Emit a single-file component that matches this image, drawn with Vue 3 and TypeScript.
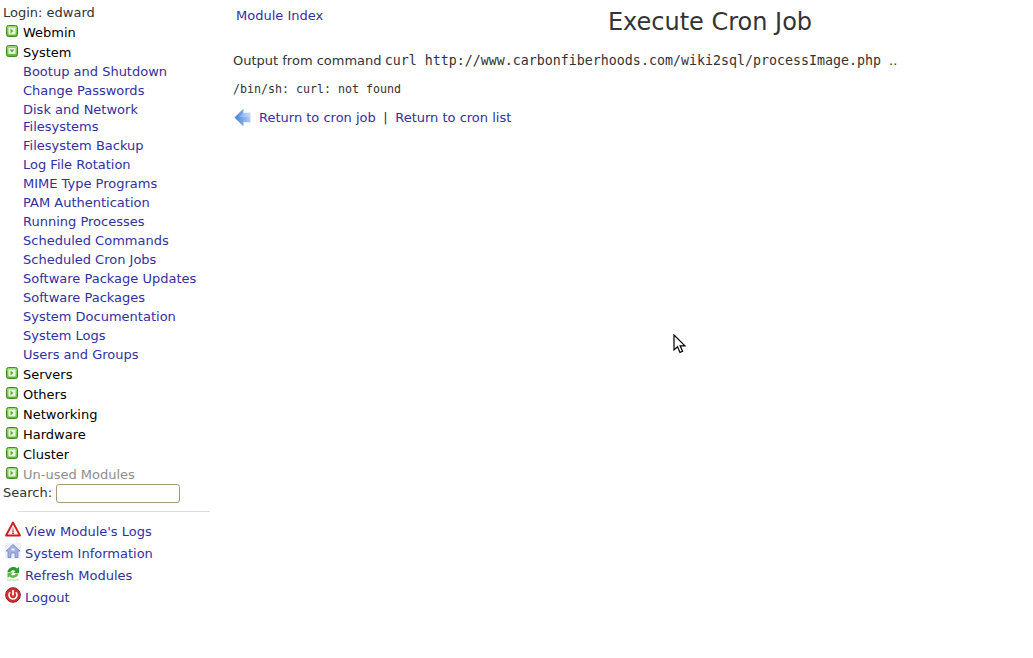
<script setup lang="ts">
const links: string[][] = [
  ['Bootup and Shutdown'],
  ['Change Passwords'],
  ['Disk and Network', 'Filesystems'],
  ['Filesystem Backup'],
  ['Log File Rotation'],
  ['MIME Type Programs'],
  ['PAM Authentication'],
  ['Running Processes'],
  ['Scheduled Commands'],
  ['Scheduled Cron Jobs'],
  ['Software Package Updates'],
  ['Software Packages'],
  ['System Documentation'],
  ['System Logs'],
  ['Users and Groups'],
]
const closed = ['Servers', 'Others', 'Networking', 'Hardware', 'Cluster']
</script>

<template>
  <div class="page">
    <svg width="0" height="0" class="defs">
      <defs>
        <linearGradient id="tg" x1="0" y1="0" x2="0" y2="1"><stop offset="0" stop-color="#9ade74"/><stop offset="1" stop-color="#5cb338"/></linearGradient>
        <linearGradient id="ar" x1="0" y1="0" x2="1" y2="0"><stop offset="0" stop-color="#3f7fdc"/><stop offset="1" stop-color="#b5cff2"/></linearGradient>
      </defs>
    </svg>
    <aside class="side">
      <div class="login">Login: edward</div>
      <div class="cat">
        <svg class="tog" viewBox="0 0 12 12"><rect x=".5" y=".5" width="11" height="11" rx="2" fill="url(#tg)" stroke="#3d8a22"/><rect x="2.500" y="2.500" width="7" height="7" fill="#e9f8dd"/><path d="M4.500 3.500l3 2.500-3 2.500z" fill="#5cb338"/></svg>
        <span>Webmin</span>
      </div>
      <div class="cat">
        <svg class="tog" viewBox="0 0 12 12"><rect x=".5" y=".5" width="11" height="11" rx="2" fill="url(#tg)" stroke="#3d8a22"/><rect x="2.500" y="3" width="7" height="6" fill="#e9f8dd"/><path d="M3.500 4.500h5L6 7.500z" fill="#5cb338"/></svg>
        <span>System</span>
      </div>
      <ul class="items">
        <li v-for="l in links" :key="l[0]"><a v-for="p in l" :key="p">{{ p }}</a></li>
      </ul>
      <div v-for="c in closed" :key="c" class="cat">
        <svg class="tog" viewBox="0 0 12 12"><rect x=".5" y=".5" width="11" height="11" rx="2" fill="url(#tg)" stroke="#3d8a22"/><rect x="2.500" y="2.500" width="7" height="7" fill="#e9f8dd"/><path d="M4.500 3.500l3 2.500-3 2.500z" fill="#5cb338"/></svg>
        <span>{{ c }}</span>
      </div>
      <div class="cat unused">
        <svg class="tog" viewBox="0 0 12 12"><rect x=".5" y=".5" width="11" height="11" rx="2" fill="url(#tg)" stroke="#3d8a22"/><rect x="2.500" y="2.500" width="7" height="7" fill="#e9f8dd"/><path d="M4.500 3.500l3 2.500-3 2.500z" fill="#5cb338"/></svg>
        <span>Un-used Modules</span>
      </div>
      <div class="search"><label>Search:</label><input type="text" /></div>
      <hr class="rule" />
      <div class="act">
        <svg viewBox="0 0 16 16"><path d="M8 1.500L15 14.500H1z" fill="#fbeeee" stroke="#d01a1e" stroke-width="1.800" stroke-linejoin="round"/><path d="M8 5.500L8.800 11H7.200z" fill="#c04a4a"/><rect x="7" y="11.500" width="2" height="1.500" fill="#c04a4a"/></svg>
        <a>View Module's Logs</a>
      </div>
      <div class="act">
        <svg viewBox="0 0 16 16"><rect width="16" height="16" fill="#eef0fa"/><path d="M1 8l7-6.500L15 8h-2v6.500H10V10H6v4.500H3V8z" fill="#a3b1e0" stroke="#6a7dc0" stroke-width=".7"/><rect x="6.500" y="5.500" width="3" height="2" fill="#eef0fa"/></svg>
        <a>System Information</a>
      </div>
      <div class="act">
        <svg viewBox="0 0 16 16"><path d="M2.500 7C3 2.500 9 .5 12 3.500L14 2v6H8.500L10.500 6C8.500 4.500 6 5 5.500 7z" fill="#2f9a2c"/><path d="M13.500 8.500C13 12.500 7.500 14.500 4.500 11.500L2.500 13V7.500H8L6 9.500C8 11 10 10.500 10.500 8.500z" fill="#5cbd42"/><path d="M2 15h12" stroke="#b5dcae" stroke-width="1.200"/></svg>
        <a>Refresh Modules</a>
      </div>
      <div class="act">
        <svg viewBox="0 0 16 16"><circle cx="8" cy="8" r="7.300" fill="#d23030" stroke="#981416"/><path d="M5.200 5.200a4 4 0 1 0 5.600 0" fill="none" stroke="#fff" stroke-width="1.600"/><path d="M8 3v5.500" stroke="#fff" stroke-width="1.800"/></svg>
        <a>Logout</a>
      </div>
    </aside>
    <main class="main">
      <header class="head">
        <a class="index">Module Index</a>
        <h1>Execute Cron Job</h1>
      </header>
      <p class="output">Output from command <code>curl http://www.carbonfiberhoods.com/wiki2sql/processImage.php </code>..</p>
      <pre class="result">/bin/sh: curl: not found</pre>
      <div class="back">
        <svg viewBox="0 0 17 19"><path d="M9.500 .5L.5 9.500l9 9V14L16.500 14.500V4.500L9.500 5z" fill="url(#ar)"/><path d="M9.500 5L16.500 4.500V9H5z" fill="#fff" opacity=".25"/></svg>
        <a>Return to cron job</a>
        <span class="sep">|</span>
        <a>Return to cron list</a>
      </div>
    </main>
    <svg class="cursor" viewBox="0 0 14 20"><path d="M1 1v15l3.500-3.200 2.500 5.600 2.600-1.100-2.500-5.500H12z" fill="#fff" stroke="#000" stroke-width="1.200" stroke-linejoin="miter"/></svg>
  </div>
</template>

<style>
html, body { background: #fff; }
</style>

<style scoped>
.page {
  display: flex;
  width: 1033px;
  height: 658px;
  overflow: hidden;
  position: relative;
  background: #fff;
  font-family: "DejaVu Sans", Verdana, sans-serif;
  font-size: 13px;
  color: #333;
}
.defs { position: absolute; }
a { color: #33309f; text-decoration: none; }
.side {
  width: 210px;
  flex: none;
  padding: 3px 0 0 3px;
  box-sizing: border-box;
  line-height: 19px;
}
.login { height: 19px; }
.cat {
  display: flex;
  align-items: flex-start;
  height: 20px;
  padding-left: 3px;
  color: #000;
  line-height: 22px;
}
.cat .tog { width: 12px; height: 12px; margin-top: 3px; margin-right: 5px; flex: none; }
.unused span { color: #8e8e8e; }
.items { list-style: none; margin: 0; padding: 0 0 0 20px; }
.items li { padding: 1px 0; }
.items a { display: block; line-height: 17px; }
.search {
  display: flex;
  align-items: flex-start;
  gap: 4px;
  height: 19px;
  line-height: 17px;
}
.search input {
  width: 124px;
  height: 19px;
  box-sizing: border-box;
  border: 1px solid #a89878;
  border-radius: 3px;
  background: #fff;
  padding: 0;
}
.rule {
  margin: 8px 0 8px 15px;
  height: 1px;
  border: 0;
  background: #ddd;
  width: 192px;
}
.act { display: flex; align-items: flex-start; height: 22px; padding-left: 2px; line-height: 24px; }
.act svg { width: 16px; height: 16px; margin-right: 4px; flex: none; margin-top: 1px; }
.main { flex: 1; padding: 0 23px; min-width: 0; }
.head { display: grid; grid-template-columns: 177px 1fr; height: 44px; }
.index { padding: 6px 0 0 3px; line-height: 19px; }
h1 {
  margin: 0;
  padding-top: 6px;
  text-align: center;
  font-size: 24px;
  font-weight: 400;
  line-height: 32px;
  color: #333;
}
.output { margin: 7px 0 0; line-height: 19px; }
code { font-family: "DejaVu Sans Mono", monospace; font-size: 13.300px; margin-left: -1px; }
.result {
  margin: 12px 0 0;
  font-family: "DejaVu Sans Mono", monospace;
  font-size: 11.630px;
  line-height: 15px;
}
.back { display: flex; align-items: center; margin-top: 11px; height: 19px; }
.back svg { width: 17px; height: 19px; margin-right: 8px; margin-left: 1px; }
.sep { margin: 0 7.500px; color: #333; }
.cursor { position: absolute; left: 673px; top: 334px; width: 14px; height: 20px; }
</style>
